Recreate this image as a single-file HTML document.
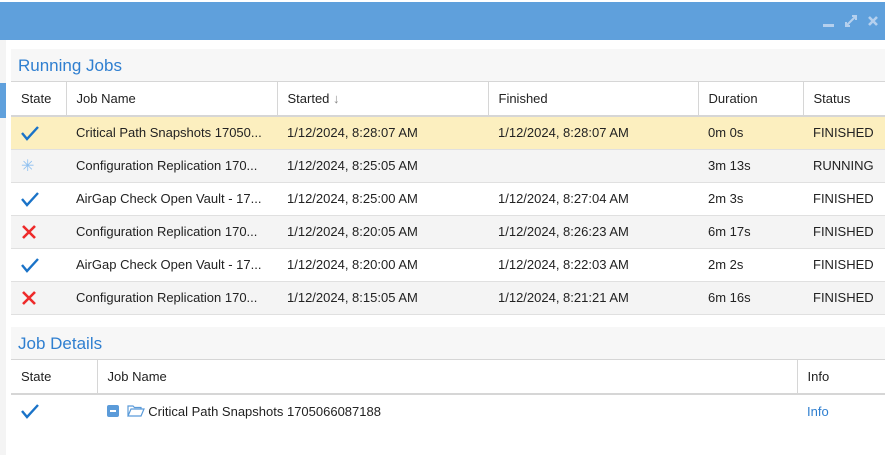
<!DOCTYPE html>
<html><head><style>
*{margin:0;padding:0;box-sizing:border-box}
body{width:885px;height:455px;overflow:hidden;background:#fff;font-family:"Liberation Sans",sans-serif;font-size:13px;color:#222;position:relative}
.a{position:absolute}
.hdr{left:0;top:2px;width:885px;height:38px;background:#5fa0dc}
.panel{left:11px;width:874px;background:#fff}
.title{background:#f7f7f7;color:#2f7fd0;font-size:17px;padding-left:7px;border-bottom:1px solid #d6d6d6}
table{border-collapse:collapse;width:874px;table-layout:fixed}
td,th{height:33px;border-bottom:1px solid #e0e0e0;text-align:left;font-weight:normal;padding-left:10px;white-space:nowrap;overflow:hidden}
th{height:34px;border-right:1px solid #d6d6d6;border-bottom:2px solid #d6d6d6}
th:last-child{border-right:none}
tr.y td{background:#fcefbf}
tr.g td{background:#f4f4f4}
svg{vertical-align:middle}
</style></head><body>
<div class="a hdr"></div>
<div class="a" style="left:0;top:40px;width:6px;height:415px;background:#f4f4f4"></div>
<div class="a" style="left:0;top:83px;width:6px;height:35px;background:#5fa0dc"></div>
<div class="a" style="left:823px;top:24px;width:11px;height:3px;background:#b5d0ee"></div>
<svg class="a" style="left:844px;top:14px" width="14" height="14" viewBox="0 0 14 14"><path d="M2 12L12 2M8 2h4v4M2 8v4h4" fill="none" stroke="#b5d0ee" stroke-width="2"/></svg>
<svg class="a" style="left:867px;top:15px" width="12" height="12" viewBox="0 0 12 12"><path d="M2 2L10 10M10 2L2 10" stroke="#b5d0ee" stroke-width="2.6"/></svg>

<div class="a panel" style="top:49px">
<div class="title" style="height:33px;line-height:34px">Running Jobs</div>
<table>
<colgroup><col style="width:55px"><col style="width:211px"><col style="width:211px"><col style="width:210px"><col style="width:105px"><col></colgroup>
<tr><th>State</th><th>Job Name</th><th>Started <span style="color:#888">↓</span></th><th>Finished</th><th>Duration</th><th>Status</th></tr>
<tr class="y"><td><svg width="18" height="16"><path d="M1 8l5 6L17 2" fill="none" stroke="#1a73c8" stroke-width="2.4"/></svg></td><td>Critical Path Snapshots 17050...</td><td>1/12/2024, 8:28:07 AM</td><td>1/12/2024, 8:28:07 AM</td><td>0m 0s</td><td>FINISHED</td></tr>
<tr class="g"><td><span style="color:#8ec0f0;font-size:16px">✳</span></td><td>Configuration Replication 170...</td><td>1/12/2024, 8:25:05 AM</td><td></td><td>3m 13s</td><td>RUNNING</td></tr>
<tr><td><svg width="18" height="16"><path d="M1 8l5 6L17 2" fill="none" stroke="#1a73c8" stroke-width="2.4"/></svg></td><td>AirGap Check Open Vault - 17...</td><td>1/12/2024, 8:25:00 AM</td><td>1/12/2024, 8:27:04 AM</td><td>2m 3s</td><td>FINISHED</td></tr>
<tr class="g"><td><svg width="16" height="16"><path d="M2 2L14 14M14 2L2 14" stroke="#ee2a2a" stroke-width="2.6"/></svg></td><td>Configuration Replication 170...</td><td>1/12/2024, 8:20:05 AM</td><td>1/12/2024, 8:26:23 AM</td><td>6m 17s</td><td>FINISHED</td></tr>
<tr><td><svg width="18" height="16"><path d="M1 8l5 6L17 2" fill="none" stroke="#1a73c8" stroke-width="2.4"/></svg></td><td>AirGap Check Open Vault - 17...</td><td>1/12/2024, 8:20:00 AM</td><td>1/12/2024, 8:22:03 AM</td><td>2m 2s</td><td>FINISHED</td></tr>
<tr class="g"><td><svg width="16" height="16"><path d="M2 2L14 14M14 2L2 14" stroke="#ee2a2a" stroke-width="2.6"/></svg></td><td>Configuration Replication 170...</td><td>1/12/2024, 8:15:05 AM</td><td>1/12/2024, 8:21:21 AM</td><td>6m 16s</td><td>FINISHED</td></tr>
</table>
</div>

<div class="a panel" style="top:327px">
<div class="title" style="height:33px;line-height:34px">Job Details</div>
<table>
<colgroup><col style="width:86px"><col style="width:700px"><col></colgroup>
<tr><th>State</th><th>Job Name</th><th>Info</th></tr>
<tr><td style="border:none"><svg width="18" height="16"><path d="M1 8l5 6L17 2" fill="none" stroke="#1a73c8" stroke-width="2.4"/></svg></td><td style="border:none"><span style="display:inline-block;width:12px;height:12px;background:#5b9bd9;border-radius:2px;vertical-align:-1px;position:relative"><span style="position:absolute;left:3px;top:5px;width:6px;height:2px;background:#fff"></span></span>
<svg width="18" height="13" viewBox="0 0 18 13" style="vertical-align:-1px;margin-left:4px"><path d="M1 12V2h5l1.5 1.5H14V5M1 12l3-7h13l-3 7z" fill="none" stroke="#5b9bd9" stroke-width="1.2"/></svg> Critical Path Snapshots 1705066087188</td><td style="border:none;color:#2f7fd0">Info</td></tr>
</table>
</div>
</body></html>
